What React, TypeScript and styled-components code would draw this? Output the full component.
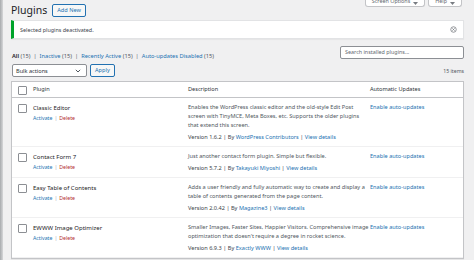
import styled, { createGlobalStyle } from "styled-components";

const GlobalStyle = createGlobalStyle`
  html, body {
    margin: 0;
    padding: 0;
    background: #f0f0f1;
    width: 474px;
    height: 260px;
    overflow: hidden;
  }
  body {
    font-family: "Noto Sans", "Open Sans", sans-serif;
    color: #3c434a;
  }
`;

interface Plugin {
  name: string;
  description: string[];
  version: string;
  author: string;
}

const plugins: Plugin[] = [
  {
    name: "Classic Editor",
    description: [
      "Enables the WordPress classic editor and the old-style Edit Post",
      "screen with TinyMCE, Meta Boxes, etc. Supports the older plugins",
      "that extend this screen.",
    ],
    version: "1.6.2",
    author: "WordPress Contributors",
  },
  {
    name: "Contact Form 7",
    description: ["Just another contact form plugin. Simple but flexible."],
    version: "5.7.2",
    author: "Takayuki Miyoshi",
  },
  {
    name: "Easy Table of Contents",
    description: [
      "Adds a user friendly and fully automatic way to create and display a",
      "table of contents generated from the page content.",
    ],
    version: "2.0.42",
    author: "Magazine3",
  },
  {
    name: "EWWW Image Optimizer",
    description: [
      "Smaller Images, Faster Sites, Happier Visitors. Comprehensive image",
      "optimization that doesn't require a degree in rocket science.",
    ],
    version: "6.9.3",
    author: "Exactly WWW",
  },
];

const Shell = styled.div`
  display: flex;
  height: 260px;
`;

const AdminEdge = styled.div`
  width: 3px;
  flex: none;
  background: linear-gradient(90deg, #a7aaad 0%, #d6d7d9 100%);
`;

const Wrap = styled.div`
  flex: 1;
  min-width: 0;
  padding: 0 10px 0 8px;
  display: flex;
  flex-direction: column;
`;

const HeaderRow = styled.div`
  display: flex;
  align-items: flex-start;
  justify-content: space-between;
  height: 18px;
`;

const TitleGroup = styled.div`
  display: flex;
  align-items: center;
  gap: 5px;
  padding-top: 3px;
`;

const Title = styled.h1`
  margin: 0;
  font-size: 10.5px;
  font-weight: 400;
  line-height: 14px;
  color: #1d2327;
`;

const OutlineButton = styled.button`
  font-family: inherit;
  font-size: 5.6px;
  line-height: 11px;
  padding: 0 4px;
  border: 1px solid #2271b1;
  border-radius: 2px;
  background: #f6f7f7;
  color: #2271b1;
  height: 13px;
`;

const Tabs = styled.div`
  display: flex;
  gap: 3px;
  margin-top: -6px;
  margin-right: 2px;
`;

const Tab = styled.div`
  height: 13px;
  padding: 0 6px 1px;
  background: #fff;
  border: 1px solid #c3c4c7;
  border-top: none;
  border-radius: 0 0 3px 3px;
  font-size: 5.4px;
  line-height: 7px;
  color: #646970;
  box-sizing: border-box;
  display: flex;
  align-items: flex-end;
  gap: 3px;
`;

const Notice = styled.div`
  margin-top: 2px;
  height: 19px;
  box-sizing: border-box;
  background: #fff;
  border: 1px solid #e2e3e5;
  border-left: 3px solid #00a32a;
  box-shadow: 0 1px 1px rgba(0, 0, 0, 0.04);
  display: flex;
  align-items: center;
  justify-content: space-between;
  padding: 0 6px 0 6px;
  font-size: 5.4px;
  color: #3c434a;
`;

const FilterRow = styled.div`
  display: flex;
  justify-content: space-between;
  align-items: flex-end;
  margin-top: 7px;
  height: 14px;
`;

const Filters = styled.div`
  font-size: 5.7px;
  color: #646970;
  padding-left: 1px;
  display: flex;
  gap: 3px;
  align-items: center;
`;

const FilterLink = styled.span<{ $current?: boolean }>`
  color: ${({ $current }) => ($current ? "#1d2327" : "#2271b1")};
  font-weight: ${({ $current }) => ($current ? 600 : 400)};
`;

const Count = styled.span`
  color: #50575e;
  font-weight: 400;
`;

const Search = styled.div`
  width: 124px;
  height: 13px;
  box-sizing: border-box;
  border: 1px solid #8c8f94;
  border-radius: 2px;
  background: #fff;
  font-size: 5.4px;
  line-height: 11px;
  color: #646970;
  padding-left: 4px;
  align-self: flex-start;
`;

const TableNav = styled.div`
  display: flex;
  align-items: center;
  justify-content: space-between;
  margin-top: 3px;
  height: 15px;
`;

const NavLeft = styled.div`
  display: flex;
  gap: 3px;
  padding-left: 1px;
`;

const Select = styled.div`
  width: 75px;
  height: 13px;
  box-sizing: border-box;
  border: 1px solid #8c8f94;
  border-radius: 2px;
  background: #fff;
  font-size: 5.6px;
  color: #2c3338;
  display: flex;
  align-items: center;
  justify-content: space-between;
  padding: 0 5px 0 3px;
`;

const Items = styled.div`
  font-size: 5.2px;
  color: #50575e;
`;

const Table = styled.div`
  margin-top: 3px;
  background: #fff;
  border: 1px solid #c3c4c7;
  box-shadow: 0 1px 1px rgba(0, 0, 0, 0.04);
`;

const Row = styled.div<{ $head?: boolean }>`
  display: grid;
  grid-template-columns: 17px 155px 182px 1fr;
  border-bottom: 1px solid ${({ $head }) => ($head ? "#c3c4c7" : "#f0f0f1")};
  font-size: 5.6px;
  line-height: 9px;
`;

const Cell = styled.div<{ $head?: boolean }>`
  padding: ${({ $head }) => ($head ? "3px 4px 3px 4px" : "5px 4px 4px 4px")};
  color: ${({ $head }) => ($head ? "#2c3338" : "#50575e")};
  min-width: 0;
  white-space: nowrap;
`;

const CheckCell = styled.div<{ $head?: boolean }>`
  padding: ${({ $head }) => ($head ? "4px 0 0 6px" : "6px 0 0 6px")};
`;

const Check = styled.div`
  width: 7px;
  height: 7px;
  border: 1px solid #8c8f94;
  border-radius: 1px;
  background: #fff;
`;

const PluginName = styled.div`
  font-size: 6px;
  line-height: 10px;
  color: #1d2327;
`;

const Actions = styled.div`
  margin-top: 1px;
  font-size: 5.2px;
  color: #a7aaad;
  display: flex;
  gap: 2px;
`;

const Link = styled.span<{ $danger?: boolean }>`
  color: ${({ $danger }) => ($danger ? "#b32d2e" : "#2271b1")};
`;

const Version = styled.div`
  margin-top: 3px;
  color: #3c434a;
`;

function Chevron() {
  return (
    <svg width="6" height="4" viewBox="0 0 6 4">
      <path d="M0.8 0.8 L3 3 L5.2 0.8" fill="none" stroke="#50575e" strokeWidth="1" />
    </svg>
  );
}

function Caret() {
  return (
    <svg width="5" height="3" viewBox="0 0 5 3">
      <path d="M0 0 H5 L2.5 3 Z" fill="#787c82" />
    </svg>
  );
}

function Dismiss() {
  return (
    <svg width="7" height="7" viewBox="0 0 14 14">
      <circle cx="7" cy="7" r="5.5" fill="none" stroke="#787c82" strokeWidth="1.6" />
      <path d="M4.7 4.7 L9.3 9.3 M9.3 4.7 L4.7 9.3" stroke="#787c82" strokeWidth="1.6" />
    </svg>
  );
}

function PluginRow({ plugin }: { plugin: Plugin }) {
  return (
    <Row>
      <CheckCell>
        <Check />
      </CheckCell>
      <Cell>
        <PluginName>{plugin.name}</PluginName>
        <Actions>
          <Link>Activate</Link>|<Link $danger>Delete</Link>
        </Actions>
      </Cell>
      <Cell>
        {plugin.description.map((line) => (
          <div key={line}>{line}</div>
        ))}
        <Version>
          Version {plugin.version} | By <Link>{plugin.author}</Link> |{" "}
          <Link>View details</Link>
        </Version>
      </Cell>
      <Cell>
        <Link>Enable auto-updates</Link>
      </Cell>
    </Row>
  );
}

export default function App() {
  return (
    <>
      <GlobalStyle />
      <Shell>
        <AdminEdge />
        <Wrap>
          <HeaderRow>
            <TitleGroup>
              <Title>Plugins</Title>
              <OutlineButton>Add New</OutlineButton>
            </TitleGroup>
            <Tabs>
              <Tab>
                Screen Options <Caret />
              </Tab>
              <Tab>
                Help <Caret />
              </Tab>
            </Tabs>
          </HeaderRow>
          <Notice>
            <span>Selected plugins deactivated.</span>
            <Dismiss />
          </Notice>
          <FilterRow>
            <Filters>
              <FilterLink $current>
                All <Count>(15)</Count>
              </FilterLink>
              |
              <FilterLink>
                Inactive <Count>(15)</Count>
              </FilterLink>
              |
              <FilterLink>
                Recently Active <Count>(15)</Count>
              </FilterLink>
              |
              <FilterLink>
                Auto-updates Disabled <Count>(15)</Count>
              </FilterLink>
            </Filters>
            <Search>Search installed plugins...</Search>
          </FilterRow>
          <TableNav>
            <NavLeft>
              <Select>
                Bulk actions <Chevron />
              </Select>
              <OutlineButton>Apply</OutlineButton>
            </NavLeft>
            <Items>15 items</Items>
          </TableNav>
          <Table>
            <Row $head>
              <CheckCell $head>
                <Check />
              </CheckCell>
              <Cell $head>Plugin</Cell>
              <Cell $head>Description</Cell>
              <Cell $head>Automatic Updates</Cell>
            </Row>
            {plugins.map((p) => (
              <PluginRow key={p.name} plugin={p} />
            ))}
          </Table>
        </Wrap>
      </Shell>
    </>
  );
}
